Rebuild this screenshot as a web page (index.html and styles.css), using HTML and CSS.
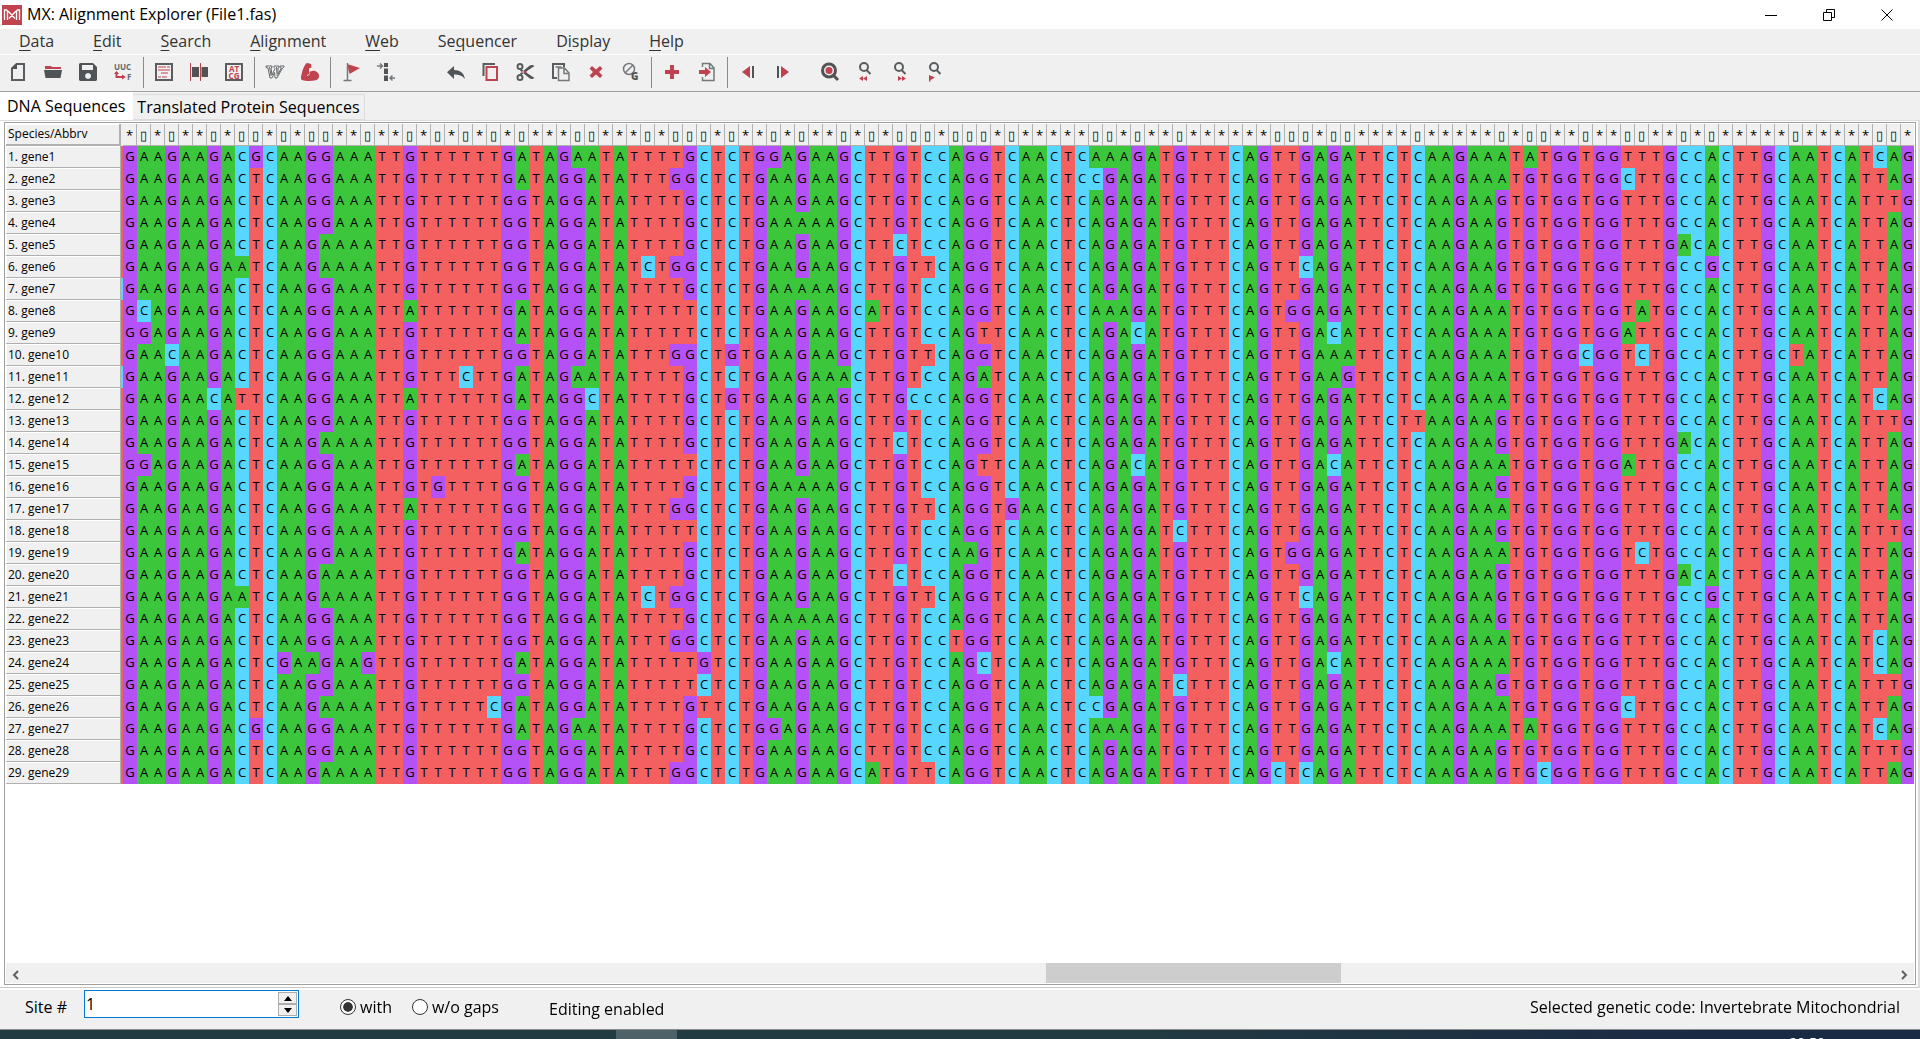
FILE: index.html
```html
<!DOCTYPE html>
<html lang="en">
<head>
    <meta charset="UTF-8">
    <meta name="viewport" content="width=device-width, initial-scale=1.0">
    <title>MX: Alignment Explorer (File1.fas)</title>
    <link rel="stylesheet" href="styles.css">
</head>
<body>
<div class="window">
    <header class="titlebar">
        <svg class="logo" viewBox="0 0 20 20"><rect width="20" height="20" fill="#c0444f"/><path d="M2.500 15V5h2l1 1v9M17.500 15V5h-2l-1 1v9M7 7l6 6.500M13 7l-6 6.500M5 5.500l2 1.500M15 5.500L13 7" fill="none" stroke="#fff" stroke-width="1.300"/></svg>
        <h1>MX: Alignment Explorer (File1.fas)</h1>
        <div class="controls">
            <button aria-label="Minimize"><svg viewBox="0 0 12 12"><path d="M0 6.500h12"/></svg></button>
            <button aria-label="Restore"><svg viewBox="0 0 12 12"><path d="M.5 3.500h8v8h-8zM3.500 3.500v-3h8v8h-3"/></svg></button>
            <button aria-label="Close"><svg viewBox="0 0 12 12"><path d="M.5.5l11 11M11.500.5l-11 11"/></svg></button>
        </div>
    </header>

    <nav class="menu">
        <button><u>D</u>ata</button>
        <button><u>E</u>dit</button>
        <button><u>S</u>earch</button>
        <button><u>A</u>lignment</button>
        <button><u>W</u>eb</button>
        <button>Se<u>q</u>uencer</button>
        <button>D<u>i</u>splay</button>
        <button><u>H</u>elp</button>
    </nav>

    <div class="toolbar">
        <button aria-label="New"><svg viewBox="0 0 20 20"><path d="M8.500 2H16v16H4V6.500z" class="line"/><path d="M3 7l6-6v6z" class="dark"/></svg></button>
        <button aria-label="Open"><svg viewBox="0 0 20 20"><path d="M2 7V4h6l1 1h9v2z" class="red"/><path d="M1 8h18l-1.500 8h-15z" class="dark"/></svg></button>
        <button aria-label="Save"><svg viewBox="0 0 20 20"><path d="M2 1h13l4 4v13l-1 1H2l-1-1V2zM4 3v5h11V3zM10 11a3 3 0 1 0 .1 0z" fill-rule="evenodd" class="dark"/></svg></button>
        <button aria-label="Translate"><svg viewBox="0 0 20 20"><text x="1" y="8" class="tiny grey">UUC</text><text x="14" y="18" class="tiny grey">F</text><path d="M3.500 10v5H11" class="redline"/><path d="M1 12l2.500-3L6 12zM9 12.500l4 2.500-4 2.500z" class="red"/></svg></button>
        <span class="sep"></span>
        <button aria-label="Sequence text"><svg viewBox="0 0 20 20"><path d="M2 2h16v16H2z" class="line"/><path d="M4 5h8M13 5h3M4 8h12M7 11h7M4 15h3M8 15h5" class="redthin"/></svg></button>
        <button aria-label="Align blocks"><svg viewBox="0 0 20 20"><path d="M3 5h7v10H3zM12.500 5H19v10h-6.500z" class="dark"/><path d="M1.500 1v18M11.500 1v18" class="redthin"/></svg></button>
        <button class="bases" aria-label="Nucleotides"><span>AT</span><span>CG</span></button>
        <span class="sep"></span>
        <button aria-label="ClustalW"><svg viewBox="0 0 20 20"><path d="M1 4h6v1.500L6 6l1 7 3-6.500L9 5.500V4h5v1.500l-1 .5v6l3.500-6L15 5.500V4h4v1l-1.500 1L12 16h-2l-.5-5.500L7 16H5L3 6 1 5.500zM4.500 5l1.600 9M11.500 5l.7 9" class="hollow"/></svg></button>
        <button aria-label="Muscle"><svg viewBox="0 0 20 20"><path d="M7.500 1L11 2l.5 3.500L9 6.500l.2 4.500c1.300-2.500 6-3 8.300-.5 3 3 1.500 7-2 7.800-4 1-9.500 1.200-13.500-.3C.6 17.500.8 15 1.500 12.500 2.400 8 4 4 6 1.500z" class="red"/><path d="M7 13.500c1.500-.2 2-.8 2.500-2" class="lightline"/></svg></button>
        <span class="sep"></span>
        <button aria-label="Flag"><svg viewBox="0 0 20 20"><path d="M6 2l13 4-10.500 6z" class="red"/><path d="M6.500 1v18M2.500 18.500h8" class="greyline"/></svg></button>
        <button aria-label="Align marked"><svg viewBox="0 0 20 20"><path d="M8 1h4v4H8zM8 6.500h4V12H8zM8 13.500h4V19H8z" class="dark"/><path d="M1 4h5M4 1.500L6.500 4 4 6.500M19 16h-4M16.500 13.500L14 16l2.500 2.500" class="greyline"/></svg></button>
        <button class="spaced" aria-label="Undo"><svg viewBox="0 0 20 20"><path d="M8 4v4c6 0 10 3 11 9-3-3.500-6-4.500-11-4.500V17L1 10.200z" class="dark"/></svg></button>
        <button aria-label="Copy"><svg viewBox="0 0 20 20"><path d="M2.500 14V2H14" class="line"/><path d="M5.500 5H16v13H5.500z" class="redline"/></svg></button>
        <button aria-label="Cut"><svg viewBox="0 0 20 20"><circle cx="4" cy="4.500" r="2.500" class="line"/><circle cx="4" cy="15.500" r="2.500" class="line"/><path d="M5 7l13.500 9c-2 1.500-3.500 1.200-5 .2L4 8.500zM5 13l13.500-9c-2-1.500-3.500-1.200-5-.2L4 11.500z" class="dark"/><path d="M7.500 10h3" class="redline"/></svg></button>
        <button aria-label="Paste"><svg viewBox="0 0 20 20"><path d="M6 16H2V2h11v3" class="line"/><path d="M7.500 6h6l4.500 5v7.500H7.500zM13 6v5.500h5" class="greyline"/><path d="M4.500 5h6" class="greyline"/></svg></button>
        <button aria-label="Delete"><svg viewBox="0 0 20 20"><path d="M6 4l4 3.500L14 4l2.500 2.500L13 10l3.500 3.500L14 16l-4-3.500L6 16l-2.500-2.500L7 10 3.500 6.500z" class="red"/></svg></button>
        <button aria-label="Delete gaps"><svg viewBox="0 0 20 20"><circle cx="8" cy="7" r="5.500" class="greyline"/><path d="M4 11l8-8" class="greyline"/><text x="10" y="18" class="letter">G</text></svg></button>
        <span class="sep"></span>
        <button aria-label="Add sequence"><svg viewBox="0 0 20 20"><path d="M8 3h4v5h5v4h-5v5H8v-5H3V8h5z" class="red"/></svg></button>
        <button aria-label="Insert from file"><svg viewBox="0 0 20 20"><path d="M5.500 5V1.500H13l4 4.500v12.500H5.500V15M12.500 2v4.500H17" class="greyline"/><path d="M2 8h6V5l6 5-6 5v-3H2z" class="red"/></svg></button>
        <span class="sep"></span>
        <button aria-label="Previous"><svg viewBox="0 0 20 20"><path d="M12 4v12L4 10z" class="red"/><path d="M14 4h2v12h-2z" class="dark"/></svg></button>
        <button aria-label="Next"><svg viewBox="0 0 20 20"><path d="M8 4v12l8-6z" class="red"/><path d="M4 4h2v12H4z" class="dark"/></svg></button>
        <button class="nudged" aria-label="Find"><svg viewBox="0 0 20 20"><circle cx="9" cy="8.500" r="6.500" class="thick"/><path d="M13.500 13.500l4.500 4.500" class="thick"/><circle cx="9" cy="8.500" r="3.500" class="red"/></svg></button>
        <button aria-label="Find previous"><svg viewBox="0 0 20 20"><circle cx="9" cy="5" r="4" class="line"/><path d="M11.500 8l4 4" class="line"/><path d="M8 14v5l-4-2.500zM12 14v5l-4-2.500z" class="red"/></svg></button>
        <button aria-label="Find next"><svg viewBox="0 0 20 20"><circle cx="9" cy="5" r="4" class="line"/><path d="M11.500 8l4 4" class="line"/><path d="M8 14v5l4-2.500zM12 14v5l4-2.500z" class="red"/></svg></button>
        <button aria-label="Find marked"><svg viewBox="0 0 20 20"><circle cx="9" cy="5" r="4" class="line"/><path d="M11.500 8l4 4" class="line"/><path d="M4 13l6 2.500L5.500 18v1.500H4z" class="red"/></svg></button>
    </div>

    <div class="tabs">
        <button class="tab active">DNA Sequences</button>
        <button class="tab">Translated Protein Sequences</button>
    </div>

    <main class="page">
        <div class="viewer">
            <div class="alignment">
                <table>
                    <thead><tr class="sites"></tr></thead>
                    <tbody class="rows"></tbody>
                </table>
            </div>
            <div class="scrollbar">
                <button aria-label="Scroll left"><svg viewBox="0 0 10 10"><path d="M7 1L3 5l4 4"/></svg></button>
                <div class="track"><div class="thumb"></div></div>
                <button aria-label="Scroll right"><svg viewBox="0 0 10 10"><path d="M3 1l4 4-4 4"/></svg></button>
            </div>
        </div>
    </main>

    <footer class="status">
        <label for="site">Site #</label>
        <div class="spinner">
            <input type="text" id="site" value="1" autofocus>
            <div class="steps">
                <button aria-label="Up"><svg viewBox="0 0 8 5"><path d="M0 5l4-5 4 5z"/></svg></button>
                <button aria-label="Down"><svg viewBox="0 0 8 5"><path d="M0 0l4 5 4-5z"/></svg></button>
            </div>
        </div>
        <div class="gaps">
            <label><input type="radio" name="gaps" checked>with</label>
            <label><input type="radio" name="gaps">w/o gaps</label>
        </div>
        <span class="editing">Editing enabled</span>
        <span class="code">Selected genetic code: Invertebrate Mitochondrial</span>
    </footer>
    <div class="taskbar"><div class="task"></div><span class="clock">20:50</span></div>
</div>
<script src="script.js"></script>
</body>
</html>
```
FILE: styles.css
```css
*{
    margin    : 0;
    padding   : 0;
    box-sizing: border-box;
}

body{
    font-family: "Open Sans", "Noto Sans", sans-serif;
    font-size  : 16px;
    color      : black;
}

button{
    font      : inherit;
    color     : inherit;
    border    : none;
    background: none;
}

.window{
    display         : flex;
    flex-direction  : column;
    height          : 100vh;
    overflow        : hidden;
    background-color: #f0f0f0;
}

.titlebar{
    display         : flex;
    align-items     : center;
    height          : 29px;
    padding-left    : 2px;
    background-color: white;
}

.logo{
    width : 20px;
    height: 20px;
}

.titlebar h1{
    flex          : 1;
    padding-left  : 5px;
    padding-bottom: 2px;
    font-size     : 16px;
    font-weight   : 400;
}

.controls{
    display: flex;
}

.controls button{
    display        : flex;
    justify-content: center;
    align-items    : center;
    width          : 58px;
    height         : 29px;
}

.controls svg{
    width       : 12px;
    height      : 12px;
    fill        : none;
    stroke      : black;
    stroke-width: 1;
}

.controls button:last-child{
    margin-right: 4px;
}

.menu{
    display      : flex;
    gap          : 1px;
    height       : 26px;
    color        : #333;
    border-bottom: 1px solid white;
}

.menu button{
    padding: 0 19px 2px;
}

.menu u{
    text-underline-offset: 3px;
}

.toolbar{
    display       : flex;
    align-items   : center;
    height        : 37px;
    padding-bottom: 2px;
    border-bottom : 1px solid #a0a0a0;
}

.toolbar button{
    display        : flex;
    justify-content: center;
    width          : 35px;
}

.toolbar svg{
    width : 20px;
    height: 20px;
}

.toolbar .spaced{
    margin-left: 35px;
}

.toolbar .nudged{
    margin-left: 12px;
}

.toolbar .bases{
    flex-direction: column;
    width         : 18px;
    height        : 18px;
    margin        : 0 8px 0 9px;
    border        : 2px solid #5a5d5f;
    font-size     : 8px;
    font-weight   : 700;
    line-height   : 7px;
    color         : #bf434f;
}

.sep{
    width           : 1px;
    height          : 31px;
    margin          : 0 2px 0 3px;
    background-color: #8a8a8a;
}

.dark{ fill: #515456; }
.red{ fill: #bf434f; }
.hollow{ fill: #f0f0f0; stroke: #66696b; stroke-width: 1; }
.line{ fill: none; stroke: #5a5d5f; stroke-width: 2; }
.greyline{ fill: none; stroke: #75787a; stroke-width: 1.5; }
.redline{ fill: none; stroke: #bf434f; stroke-width: 2; }
.redthin{ fill: none; stroke: #bf434f; stroke-width: 1; }
.lightline{ fill: none; stroke: #f0f0f0; stroke-width: 1; }
.thick{ fill: none; stroke: #515456; stroke-width: 3; }

.tiny{
    font-size  : 8px;
    font-weight: 700;
}

.grey{ fill: #66696b; }

.letter{
    font-size  : 10px;
    font-weight: 800;
    fill       : #515456;
}

.tabs{
    display    : flex;
    align-items: flex-end;
    height     : 28px;
}

.tab{
    height      : 26px;
    padding     : 0 4px;
    border      : 1px solid #dcdcdc;
    border-left : none;
}

.tab.active{
    height          : 28px;
    padding         : 0 7px;
    background-color: white;
    border-color    : white;
}

.page{
    flex            : 1;
    display         : flex;
    min-height      : 0;
    padding         : 1px 2px 2px 4px;
    background-color: white;
    border-top      : 1px solid #dcdcdc;
    border-right    : 2px solid #dcdcdc;
    border-bottom   : 1px solid #c8c8c8;
}

.viewer{
    flex          : 1;
    display       : flex;
    flex-direction: column;
    min-width     : 0;
    padding       : 1px;
    border        : 1px solid #a0a0a0;
}

.alignment{
    flex    : 1;
    overflow: hidden;
}

table{
    width          : 1909px;
    table-layout   : fixed;
    border-collapse: separate;
    border-spacing : 0;
    font-size      : 13px;
    line-height    : 14px;
}

th{
    font-weight     : 400;
    background-color: #f0f0f0;
}

.name{
    width        : 115px;
    height       : 22px;
    padding-left : 2px;
    font-size    : 12px;
    text-align   : left;
    white-space  : nowrap;
    border-right : 1px solid #b0b0b0;
    border-bottom: 1px solid #b0b0b0;
    box-shadow   : inset 1px 1px white;
}

.sites .name{
    border-right : 2px solid #b0b0b0;
    border-bottom: 2px solid #b0b0b0;
}

.previous{
    width: 2px;
}

.site{
    width        : 14px;
    height       : 22px;
    border-right : 1px solid #b0b0b0;
    border-bottom: 1px solid #b0b0b0;
}

td{
    height        : 22px;
    padding-bottom: 2px;
    text-align    : center;
}

.A{ background-color: #3cc63c; }
.C{ background-color: #57d7ff; }
.G{ background-color: #b452f8; }
.T{ background-color: #f46060; }

.scrollbar{
    display         : flex;
    height          : 20px;
    background-color: #f0f0f0;
}

.scrollbar button{
    width : 20px;
    height: 20px;
}

.scrollbar svg{
    width       : 10px;
    height      : 10px;
    fill        : none;
    stroke      : #606060;
    stroke-width: 2;
}

.track{
    flex: 1;
}

.thumb{
    width           : 15.8%;
    height          : 20px;
    margin-left     : 54.6%;
    background-color: #cdcdcd;
}

.status{
    display      : flex;
    align-items  : center;
    height       : 42px;
    padding      : 0 20px 6px 25px;
    border-top   : 2px solid white;
    border-bottom: 1px solid #8c8c8c;
}

.spinner{
    display         : flex;
    align-self      : flex-start;
    width           : 215px;
    height          : 28px;
    margin-left     : 17px;
    padding         : 1px;
    background-color: white;
    border          : 1px solid #0078d7;
}

.spinner input{
    flex     : 1;
    min-width: 0;
    border   : none;
    outline  : none;
    font     : inherit;
}

.steps{
    display       : flex;
    flex-direction: column;
    width         : 19px;
}

.steps button{
    flex           : 1;
    display        : flex;
    justify-content: center;
    align-items    : center;
    border         : 1px solid #acacac;
    background     : #f0f0f0;
}

.steps svg{
    width : 8px;
    height: 5px;
}

.gaps{
    display    : flex;
    gap        : 20px;
    margin-left: 41px;
}

.gaps label{
    display    : flex;
    align-items: center;
    gap        : 4px;
}

.gaps input{
    appearance      : none;
    width           : 16px;
    height          : 16px;
    padding         : 2px;
    background-color: white;
    background-clip : content-box;
    border          : 1px solid #333;
    border-radius   : 50%;
    box-shadow      : inset 0 0 0 2px white;
}

.gaps input:checked{
    background-color: #333;
}

.editing{
    margin-left: 50px;
    padding-top: 4px;
}

.code{
    margin-left: auto;
}

.taskbar{
    display     : flex;
    height      : 9px;
    padding-left: 616px;
    overflow    : hidden;
    background  : linear-gradient(to right, #223a42 60%, #1a2944 90%);
}

.task{
    width           : 61px;
    background-color: #4e6068;
}

.clock{
    margin-left : auto;
    padding     : 6px 95px 0 0;
    font-size   : 14px;
    line-height : 14px;
    color       : white;
}
```
FILE: script.js
```javascript
// last base of the previous screen, then the 128 visible sites
const sequences = [
    ["T", "GAAGAAGACGCAAGGAAATTGTTTTTTGATAG", "AATATTTTGCTCTGGAGAAGCTTGTCCAGGTC", "AACTCAAAGATGTTTCAGTTGAGATTCTCAAG", "AAATATGGTGGTTTGCCACTTGCAATCATCAG"],
    ["T", "GAAGAAGACTCAAGGAAATTGTTTTTTGATAG", "GATATTTGGCTCTGAAGAAGCTTGTCCAGGTC", "AACTCCGAGATGTTTCAGTTGAGATTCTCAAG", "AAATGTGGTGGCTTGCCACTTGCAATCATTAG"],
    ["T", "GAAGAAGACTCAAGGAAATTGTTTTTTGGTAG", "GATATTTTGCTCTGAAGAAGCTTGTCCAGGTC", "AACTCAGAGATGTTTCAGTTGAGATTCTCAAG", "AAGTGTGGTGGTTTGCCACTTGCAATCATTTG"],
    ["T", "GAAGAAGACTCAAGGAAATTGTTTTTTGGTAG", "GATATTTTGCTCTGAAAAAGCTTGTCCAGGTC", "AACTCAGAGATGTTTCAGTTGAGATTCTCAAG", "AAGTGTGGTGGTTTGCCACTTGCAATCATTAG"],
    ["T", "GAAGAAGACTCAAGAAAATTGTTTTTTGGTAG", "GATATTTTGCTCTGAAGAAGCTTCTCCAGGTC", "AACTCAGAGATGTTTCAGTTGAGATTCTCAAG", "AAGTGTGGTGGTTTGACACTTGCAATCATTAG"],
    ["T", "GAAGAAGAATCAAGAAAATTGTTTTTTGGTAG", "GATATCTGGCTCTGAAGAAGCTTGTTCAGGTC", "AACTCAGAGATGTTTCAGTTCAGATTCTCAAG", "AAGTGTGGTGGTTTGCCGCTTGCAATCATTAG"],
    ["C", "GAAGAAGACTCAAGGAAATTGTTTTTTGGTAG", "GATATTTTGCTCTGAAAAAGCTTGTCCAGGTC", "AACTCAGAGATGTTTCAGTTGAGATTCTCAAG", "AAGTGTGGTGGTTTGCCACTTGCAATCATTAG"],
    ["T", "GCAGAAGACTCAAGGAAATTATTTTTTGATAG", "GATATTTTTCTCTGAAGAAGCATGTCCAGGTC", "AACTCAAAGATGTTTCAGTGGAGATTCTCAAG", "AAATGTGGTGGTATGCCACTTGCAATCATTAG"],
    ["T", "GGAGAAGACTCAAGGAAATTGTTTTTTGATAG", "GATATTTTTCTCTGAAGAAGCTTGTCCAGTTC", "AACTCAGACATGTTTCAGTTGACATTCTCAAG", "AAATGTGGTGGATTGCCACTTGCAATCATTAG"],
    ["T", "GAACAAGACTCAAGGAAATTGTTTTTTGGTAG", "GATATTTGGCTGTGAAGAAGCTTGTTCAGGTC", "AACTCAGAGATGTTTCAGTTGAAATTCTCAAG", "AAATGTGGCGGTCTGCCACTTGCTATCATTAG"],
    ["C", "GAAGAAGACTCAAGGAAATTGTTTCTTGATAG", "AATATTTTGCTCTGAAGAAACTTGTCCAGATC", "AACTCAGAGATGTTTCAGTTGAAGTTCTCAAG", "AAATGTGGTGGTTTGCCACTTGCAATCATTAG"],
    ["T", "GAAGAACATTCAAGGAAATTATTTTTTGATAG", "GCTATTTTGCTGTGAAGAAGCTTGCCCAGGTC", "AACTCAGAGATGTTTCAGTTGAGATTCTCAAG", "AAATGTGGTGGTTTGCCACTTGCAATCATCAG"],
    ["T", "GAAGAAGACTCAAGGAAATTGTTTTTTGGTAG", "GATATTTTGCTCTGAAGAAGCTTGTCCAGGTC", "AACTCAGAGATGTTTCAGTTGAGATTCTTAAG", "AAGTGTGGTGGTTTGCCACTTGCAATCATTTG"],
    ["T", "GAAGAAGACTCAAGAAAATTGTTTTTTGGTAG", "GATATTTTGCTCTGAAGAAGCTTCTCCAGGTC", "AACTCAGAGATGTTTCAGTTGAGATTCTCAAG", "AAGTGTGGTGGTTTGACACTTGCAATCATTAG"],
    ["T", "GGAGAAGACTCAAGGAAATTGTTTTTTGATAG", "GATATTTTTCTCTGAAGAAGCTTGTCCAGTTC", "AACTCAGACATGTTTCAGTTGACATTCTCAAG", "AAATGTGGTGGATTGCCACTTGCAATCATTAG"],
    ["T", "GAAGAAGACTCAAGGAAATTGTGTTTTGGTAG", "GATATTTTGCTCTGAAAAAGCTTGTCCAGGTC", "AACTCAGAGATGTTTCAGTTGAGATTCTCAAG", "AAGTGTGGTGGTTTGCCACTTGCAATCATTAG"],
    ["T", "GAAGAAGACTCAAGGAAATTATTTTTTGGTAG", "GATATTTGGCTCTGAAGAAGCTTGTTCAGGTG", "AACTCAGAGATGTTTCAGTTGAGATTCTCAAG", "AAATGTGGTGGTTTGCCACTTGCAATCATTAG"],
    ["T", "GAAGAAGACTCAAGGAAATTGTTTTTTGGTAG", "GATATTTTTCTCTGAAGAAGCTTGTCCAGGTC", "AACTCAGAGATCTTTCAGTTGAGATTCTCAAG", "AAGTGTGGTGGTTTGCCACTTGCAATCATTTG"],
    ["T", "GAAGAAGACTCAAGGAAATTGTTTTTTGATAG", "GATATTTTGCTCTGAAGAAGCTTGTCCAAGTC", "AACTCAGAGATGTTTCAGTGGAGATTCTCAAG", "AAATGTGGTGGTCTGCCACTTGCAATCATTAG"],
    ["T", "GAAGAAGACTCAAGAAAATTGTTTTTTGGTAG", "GATATTTTGCTCTGAAGAAGCTTCTCCAGGTC", "AACTCAGAGATGTTTCAGTTGAGATTCTCAAG", "AAGTGTGGTGGTTTGACACTTGCAATCATTAG"],
    ["T", "GAAGAAGAATCAAGAAAATTGTTTTTTGGTAG", "GATATCTGGCTCTGAAGAAGCTTGTTCAGGTC", "AACTCAGAGATGTTTCAGTTCAGATTCTCAAG", "AAGTGTGGTGGTTTGCCGCTTGCAATCATTAG"],
    ["T", "GAAGAAGACTCAAGGAAATTGTTTTTTGGTAG", "GATATTTTGCTCTGAAAAAGCTTGTCCAGGTC", "AACTCAGAGATGTTTCAGTTGAGATTCTCAAG", "AAGTGTGGTGGTTTGCCACTTGCAATCATTAG"],
    ["T", "GAAGAAGACTCAAGGAAATTGTTTTTTGGTAG", "GATATTTGGCTCTGAAGAAGCTTGTCCTGGTC", "AACTCAGAGATGTTTCAGTTGAGATTCTCAAG", "AAATGTGGTGGTTTGCCACTTGCAATCATCAG"],
    ["T", "GAAGAAGACTCGAAGAAGTTGTTTTTTGATAG", "GATATTTTTGTCTGAAGAAGCTTGTCCAGCTC", "AACTCAGAGATGTTTCAGTTGACATTCTCAAG", "AAATGTGGTGGTTTGCCACTTGCAATCATCAG"],
    ["T", "GAAGAAGACTCAAGGAAATTGTTTTTTGGTAG", "GATATTTTTCTCTGAAGAAGCTTGTCCAGGTC", "AACTCAGAGATCTTTCAGTTGAGATTCTCAAG", "AAGTGTGGTGGTTTGCCACTTGCAATCATTTG"],
    ["T", "GAAGAAGACTCAAGAAAATTGTTTTTCGATAG", "GATATTTTGTTCTGAAGAAGCTTGTCCAGGTC", "AACTCCGAGATGTTTCAGTTGAGATTCTCAAG", "AAATGTGGTGGCTTGCCACTTGCAATCATTAG"],
    ["T", "GAAGAAGACGCAAGGAAATTGTTTTTTGATAG", "AATATTTTGCTCTGGAGAAGCTTGTCCAGGTC", "AACTCAAAGATGTTTCAGTTGAGATTCTCAAG", "AAATATGGTGGTTTGCCACTTGCAATCATCAG"],
    ["T", "GAAGAAGACTCAAGGAAATTGTTTTTTGGTAG", "GATATTTTGCTCTGAAGAAGCTTGTCCAGGTC", "AACTCAGAGATGTTTCAGTTGAGATTCTCAAG", "AAGTGTGGTGGTTTGCCACTTGCAATCATTTG"],
    ["T", "GAAGAAGACTCAAGAAAATTGTTTTTTGGTAG", "GATATTTGGCTCTGAAGAAGCATGTTCAGGTC", "AACTCAGAGATGTTTCAGCTCAGATTCTCAAG", "AAGTGCGGTGGTTTGCCACTTGCAATCATTAG"]
];

const bases = sequences.map(parts => parts.slice(1).join(""));

// a site gets a star when every gene has the same base there
let sites = '<th class="name">Species/Abbrv</th><th class="previous"></th>';
for (let i = 0; i < bases[0].length; i++) {
    const same = bases.every(seq => seq[i] === bases[0][i]);
    sites += `<th class="site">${same ? "*" : "▯"}</th>`;
}
document.querySelector('.sites').innerHTML = sites;

let rows = "";
bases.forEach((seq, n) => {
    rows += `<tr><th class="name">${n + 1}. gene${n + 1}</th><td class="${sequences[n][0]}"></td>`;
    for (const base of seq) {
        rows += `<td class="${base}">${base}</td>`;
    }
    rows += "</tr>";
});
document.querySelector('.rows').innerHTML = rows;
```
